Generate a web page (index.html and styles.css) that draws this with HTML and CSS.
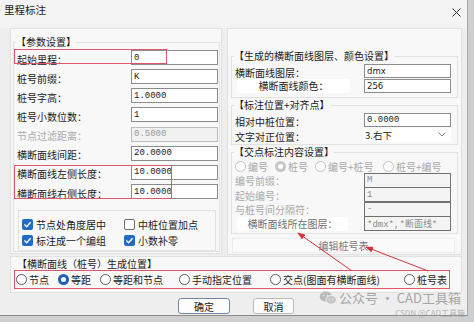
FILE: index.html
```html
<!DOCTYPE html>
<html lang="zh-CN">
<head>
    <meta charset="UTF-8">
    <title>里程标注</title>
    <link rel="stylesheet" href="styles.css">
</head>
<body>
    <div class="window">
        <div class="titlebar">
            <span class="title">里程标注</span>
            <svg class="close" viewBox="0 0 9 9" width="9" height="9">
                <path d="M0.5 0.5 L8.5 8.5 M8.5 0.5 L0.5 8.5" stroke="#333" stroke-width="1" fill="none"/>
            </svg>
        </div>

        <div class="top">
            <!-- left: parameters -->
            <div class="panel left">
                <fieldset class="params">
                    <legend>【参数设置】</legend>
                    <div class="rows">
                        <div class="row"><label>起始里程：</label><input class="field" type="text" value="0"></div>
                        <div class="row"><label>桩号前缀：</label><input class="field" type="text" value="K"></div>
                        <div class="row"><label>桩号字高：</label><input class="field" type="text" value="1.0000"></div>
                        <div class="row"><label>桩号小数位数：</label><input class="field" type="text" value="1"></div>
                        <div class="row"><label class="off">节点过滤距离：</label><input class="field" type="text" value="0.5000" disabled></div>
                        <div class="row"><label>横断面线间距：</label><input class="field" type="text" value="20.0000"></div>
                        <div class="row"><label>横断面线左侧长度：</label><input class="field" type="text" value="10.0000"></div>
                        <div class="row"><label>横断面线右侧长度：</label><input class="field" type="text" value="10.0000"></div>
                    </div>
                    <div class="checks">
                        <div class="check"><span class="cb"><svg viewBox="0 0 11 11"><path d="M2.4 5.6 L4.6 7.8 L8.6 3.2"/></svg></span>节点处角度居中</div>
                        <div class="check"><span class="cb off"></span>中桩位置加点</div>
                        <div class="check"><span class="cb"><svg viewBox="0 0 11 11"><path d="M2.4 5.6 L4.6 7.8 L8.6 3.2"/></svg></span>标注成一个编组</div>
                        <div class="check"><span class="cb"><svg viewBox="0 0 11 11"><path d="M2.4 5.6 L4.6 7.8 L8.6 3.2"/></svg></span>小数补零</div>
                    </div>
                </fieldset>
            </div>

            <!-- right: layer / position / intersection -->
            <div class="panel right">
                <fieldset class="layer">
                    <legend>【生成的横断面线图层、颜色设置】</legend>
                    <div class="rrow"><label>横断面线图层：</label><input class="field small" type="text" value="dmx"></div>
                    <div class="rrow"><span class="tag">横断面线颜色：</span><input class="field small" type="text" value="256"></div>
                </fieldset>
                <fieldset class="place">
                    <legend>【标注位置+对齐点】</legend>
                    <div class="rrow"><label>相对中桩位置：</label><input class="field" type="text" value="0.0000"></div>
                    <div class="rrow"><label>文字对正位置：</label>
                        <div class="select">3.右下
                            <svg viewBox="0 0 8 5" width="8" height="5"><path d="M0.5 0.5 L4 4 L7.5 0.5" stroke="#888" fill="none"/></svg>
                        </div>
                    </div>
                </fieldset>
                <fieldset class="cross">
                    <legend>【交点标注内容设置】</legend>
                    <div class="radios off">
                        <span class="radio"><i class="dot"></i>编号</span>
                        <span class="radio"><i class="dot on"></i>桩号</span>
                        <span class="radio"><i class="dot"></i>编号+桩号</span>
                        <span class="radio"><i class="dot"></i>桩号+编号</span>
                    </div>
                    <div class="rrow tight"><label class="off">编号前缀：</label><input class="field dark" type="text" value="M" disabled></div>
                    <div class="rrow tight"><label class="off">起始编号：</label><input class="field dark" type="text" value="1" disabled></div>
                    <div class="rrow tight"><label class="off">与桩号间分隔符：</label><input class="field dark" type="text" value="-" disabled></div>
                    <div class="rrow tight"><span class="tag grey">横断面线所在图层：</span><input class="field dark" type="text" value="*dmx*,*断面线*" disabled></div>
                </fieldset>
                <div class="edit-bar">编辑桩号表</div>
            </div>
        </div>

        <!-- bottom: where to generate -->
        <div class="panel bottom">
            <div class="bottom-title">【横断面线（桩号）生成位置】</div>
            <div class="radios place-row">
                <span class="radio"><i class="dot"></i>节点</span>
                <span class="radio"><i class="dot on"></i>等距</span>
                <span class="radio"><i class="dot"></i>等距和节点</span>
                <span class="radio"><i class="dot"></i>手动指定位置</span>
                <span class="radio"><i class="dot"></i>交点(图面有横断面线)</span>
                <span class="radio"><i class="dot"></i>桩号表</span>
            </div>
        </div>

        <div class="buttons">
            <button class="btn primary">确定</button>
            <button class="btn">取消</button>
        </div>

        <!-- annotations over the screenshot -->
        <div class="mark mark-start"></div>
        <div class="mark mark-length"></div>
        <svg class="arrows" width="467" height="315" viewBox="0 0 467 315">
            <defs>
                <marker id="head" markerWidth="8" markerHeight="6" refX="7" refY="3" orient="auto">
                    <path d="M0 0 L8 3 L0 6 Z" fill="#d9323f"/>
                </marker>
            </defs>
            <line x1="352" y1="271" x2="298" y2="233" stroke="#d9323f" stroke-width="1" marker-end="url(#head)"/>
            <line x1="428" y1="271" x2="366" y2="247" stroke="#d9323f" stroke-width="1" marker-end="url(#head)"/>
        </svg>

        <div class="watermark">
            <svg class="wechat" viewBox="0 0 20 16" width="18" height="14">
                <ellipse cx="7.5" cy="6.5" rx="7" ry="5.8" fill="#b9b9b9"/>
                <ellipse cx="13.5" cy="10" rx="6" ry="5" fill="#c8c8c8" stroke="#eeeeee" stroke-width="1"/>
                <circle cx="5" cy="5" r="0.9" fill="#eee"/>
                <circle cx="9.5" cy="5" r="0.9" fill="#eee"/>
                <circle cx="11.6" cy="9.3" r="0.7" fill="#eee"/>
                <circle cx="15.4" cy="9.3" r="0.7" fill="#eee"/>
            </svg>
            <span>公众号 · CAD工具箱</span>
        </div>
        <div class="csdn">CSDN @CAD工具箱</div>
    </div>
</body>
</html>
```

FILE: styles.css
```css
* {
    box-sizing: border-box;
}

html, body {
    margin: 0;
    padding: 0;
}

body {
    width: 474px;
    height: 322px;
    overflow: hidden;
    background: #cfcfcf;
    font-family: "Noto Sans CJK SC", "Noto Sans", sans-serif;
    font-size: 10px;
    color: #1b1b1b;
}

/* Window */
.window {
    position: relative;
    width: 468px;
    height: 316px;
    background: #eeeeee;
    border-right: 1px solid #a8a8a8;
    border-bottom: 1px solid #8a8a8a;
}

.titlebar {
    height: 28px;
    display: flex;
    justify-content: space-between;
    padding: 3px 0 0 4px;
    background: #f3f3f3;
}

.title {
    font-size: 10.5px;
    line-height: 14px;
}

.close {
    margin: 5px 6px 0 0;
}

/* Panels */
.top {
    display: flex;
    gap: 5px;
    padding-left: 10px;
}

.panel {
    background: #f8f8f8;
    border: 1px solid #e1e1e1;
}

fieldset {
    margin: 0;
    min-width: 0;
    border: 1px solid #e2e2e2;
}

legend {
    padding: 0;
    margin-left: -1px;
    line-height: 14px;
}

.left {
    width: 212px;
    height: 226px;
    padding: 6px 0 0 2px;
}

.params {
    width: 207px;
    height: 217px;
    padding: 0 1px 0 3px;
}

.rows {
    margin-top: -1px;
}

.row {
    display: flex;
    align-items: center;
    height: 19.15px;
}

.row label,
.rrow label {
    flex: 1;
    padding-top: 3px;
    white-space: nowrap;
}

.off,
.radios.off {
    color: #a9a9a9;
}

.field {
    width: 87px;
    height: 15px;
    margin: 0;
    padding: 0 0 0 2px;
    border: 1px solid #8c8c8c;
    background: #fff;
    font: 9px "Liberation Mono", monospace;
    color: #222;
    outline: none;
}

.field:disabled {
    background: #f1f1f1;
    border-color: #bcbcbc;
    color: #9a9a9a;
}

.field.small {
    height: 14px;
    font: 8.5px "DejaVu Sans", sans-serif;
}

.field.dark {
    border-color: #707070;
    background: #f4f4f4;
    color: #8a8a8a;
}

/* Checkboxes */
.checks {
    display: grid;
    grid-template-columns: 102px auto;
    grid-auto-rows: 16px;
    width: 198px;
    height: 41px;
    margin: 9px 0 0 1px;
    padding: 5px 0 0 3px;
    border: 1px solid #e2e2e2;
}

.check {
    display: flex;
    align-items: center;
    gap: 3px;
}

.cb {
    display: flex;
    width: 11px;
    height: 11px;
    border-radius: 2px;
    background: #1f6bc5;
}

.cb svg path {
    stroke: #fff;
    stroke-width: 1.4;
    fill: none;
}

.cb.off {
    background: #fff;
    border: 1px solid #6e6e6e;
}

/* Right panel */
.right {
    width: 235px;
    height: 227px;
    padding: 20px 0 0 3px;
}

.right fieldset {
    width: 227px;
    padding: 0 6px 0 3px;
}

.layer {
    padding-bottom: 4px !important;
}

.place {
    padding-bottom: 2px !important;
}

.cross {
    padding-bottom: 2px !important;
}

.rrow {
    display: flex;
    align-items: center;
    height: 15px;
}

.rrow .field {
    height: 14px;
}

.rrow.tight {
    height: 14.5px;
}

.rrow.tight label {
    padding-top: 1px;
    line-height: 13px;
}

.rrow.tight .field {
    height: 15px;
}

.tag {
    width: 113px;
    height: 14px;
    margin: 0 auto 0 2px;
    background: #fff;
    border-radius: 2px;
    text-align: center;
    line-height: 14px;
}

.tag.grey {
    width: 111px;
    color: #6f6f6f;
}

.select {
    display: flex;
    align-items: center;
    justify-content: space-between;
    width: 88px;
    height: 14px;
    padding: 0 5px 0 2px;
    background: #fff;
    font-size: 9.5px;
}

.edit-bar {
    width: 223px;
    height: 15px;
    margin: 4px 0 0 1px;
    background: #fbfbfb;
    border: 1px solid #ececec;
    text-align: center;
    line-height: 13px;
    color: #7a7a7a;
}

/* Radios */
.radios {
    display: flex;
    align-items: center;
}

.radio {
    display: flex;
    align-items: center;
    gap: 2px;
    white-space: nowrap;
}

.dot {
    display: inline-block;
    width: 11px;
    height: 11px;
    border-radius: 50%;
    border: 1px solid #5c5c5c;
    background: #fff;
}

.dot.on {
    border: 3.5px solid #1f5fb8;
}

.cross .radios {
    height: 14px;
    padding-top: 1px;
    line-height: 12px;
}

.cross .dot {
    border-color: #c4c4c4;
}

.cross .dot.on {
    border: 3.5px solid #c6c6c6;
}

.cross .radio:nth-child(1),
.cross .radio:nth-child(2) {
    width: 40px;
}

.cross .radio:nth-child(3) {
    width: 68px;
}

/* Bottom panel */
.bottom {
    width: 452px;
    height: 37px;
    margin: 1px 0 0 10px;
    padding-left: 3px;
}

.bottom-title {
    height: 13px;
    padding-left: 3px;
    line-height: 13px;
}

.place-row {
    width: 436px;
    height: 19px;
    padding-left: 1px;
    border: 1px solid #e0566a;
}

.place-row .radio:nth-child(1),
.place-row .radio:nth-child(2) {
    width: 42px;
}

.place-row .radio:nth-child(3) {
    width: 79px;
}

.place-row .radio:nth-child(4) {
    width: 91px;
}

.place-row .radio:nth-child(5) {
    width: 134px;
}

/* Buttons */
.buttons {
    display: flex;
    gap: 23px;
    margin: 5px 0 0 178px;
}

.btn {
    height: 16px;
    padding: 0;
    border: 1px solid #b9b9b9;
    border-radius: 3px;
    background: #fdfdfd;
    font-family: "Noto Sans CJK SC", sans-serif;
    font-size: 10px;
    line-height: 13px;
    color: #1b1b1b;
}

.btn.primary {
    width: 52px;
    border-color: #6f86a3;
}

.btn:not(.primary) {
    width: 41px;
}

/* Annotations */
.mark {
    position: absolute;
    border: 1px solid #e0566a;
}

.mark-start {
    left: 14px;
    top: 49px;
    width: 153px;
    height: 15px;
}

.mark-length {
    left: 14px;
    top: 165px;
    width: 158px;
    height: 34px;
}

.arrows {
    position: absolute;
    left: 0;
    top: 0;
    pointer-events: none;
}

.watermark {
    position: absolute;
    left: 319px;
    top: 290px;
    display: flex;
    align-items: center;
    gap: 2px;
    white-space: nowrap;
    font-size: 13px;
    line-height: 16px;
    color: rgba(140, 140, 140, 0.75);
}

.csdn {
    position: absolute;
    right: 2px;
    top: 308px;
    white-space: nowrap;
    font-size: 8px;
    line-height: 9px;
    color: rgba(150, 150, 150, 0.7);
}
```
